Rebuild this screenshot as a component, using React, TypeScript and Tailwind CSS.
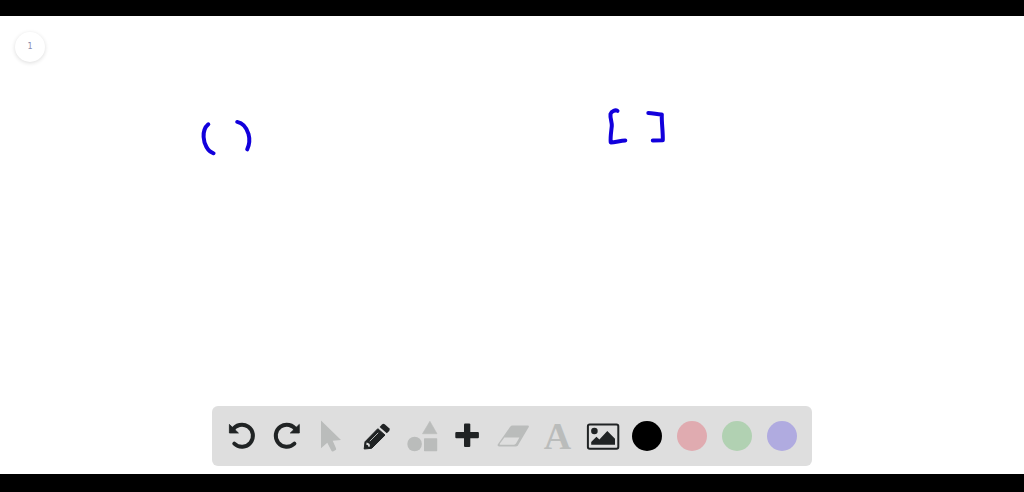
import { useState, type ReactNode } from "react";

const undoShape = (
  <>
    <path d="M5.4 9.2A11 11 0 1 1 7.3 22.6" fill="none" stroke="currentColor" strokeWidth="4" strokeLinecap="round" />
    <path d="M2.4 3.4 11.4 12H2.4Z" fill="currentColor" stroke="currentColor" strokeWidth=".8" strokeLinejoin="round" />
  </>
);

type Tool = { name: string; muted?: boolean; drawing: ReactNode };

const tools: Tool[] = [
  { name: "Undo", drawing: undoShape },
  { name: "Redo", drawing: <g transform="matrix(-1 0 0 1 29.7 0)">{undoShape}</g> },
  {
    name: "Select",
    muted: true,
    drawing: <path d="M4-.5V27.3L10.3 21.7 14.3 29.5Q15 31 16.5 30.2L18.3 29.3Q19.6 28.5 19 27.2L15.7 19.7 24 19Z" fill="currentColor" />,
  },
  {
    name: "Pen",
    drawing: (
      <>
        <path d="M2.2 28 3 20.8 15.8 7.7 23 14.1 9.7 27.3Z" fill="currentColor" stroke="currentColor" strokeWidth="1" strokeLinejoin="round" />
        <path d="M17.6 5.9 20 3.4Q21.3 2.2 22.7 3.3L27.2 7.3Q28.3 8.5 27.2 9.9L24.8 12.3Z" fill="currentColor" />
        <path d="M7.8 20.2 16.2 11.8" stroke="#dedede" strokeWidth=".8" />
        <path d="M4.6 21.6 4.3 23.8 6 24.2 6.3 25.8 8 25.6 7.6 23 6 22Z" fill="#dedede" />
      </>
    ),
  },
  {
    name: "Shapes",
    muted: true,
    drawing: (
      <g fill="currentColor">
        <circle cx="7.6" cy="23" r="7.3" />
        <rect x="17" y="17.2" width="13.2" height="13" rx=".6" />
        <path d="M22.9.3 30 12.7H15.5Z" stroke="currentColor" strokeWidth=".6" strokeLinejoin="round" />
      </g>
    ),
  },
  {
    name: "Add",
    drawing: (
      <g fill="currentColor">
        <rect x="3.3" y="11" width="23.6" height="6.3" rx="1.1" />
        <rect x="12" y="2.4" width="6.3" height="23.6" rx="1.1" />
      </g>
    ),
  },
  {
    name: "Eraser",
    muted: true,
    drawing: (
      <>
        <path d="M15.5 4.6H31Q32.4 4.8 31.6 6.2L21 24.2Q20 25.5 18.5 25.5H2Q-.1 25.2 .9 23.3L13 5.9Q14 4.6 15.5 4.6Z" fill="currentColor" />
        <path d="M7.4 16.6H22.4L19 22.6Q18.3 23.7 17 23.7H3.4Q2.2 23.5 2.8 22.7Z" fill="#dedede" />
      </>
    ),
  },
  {
    name: "Text",
    muted: true,
    drawing: (
      <text x="15.5" y="28" textAnchor="middle" fontSize="38" fontWeight="700" fill="currentColor" className="font-['Liberation_Serif',serif]">
        A
      </text>
    ),
  },
  {
    name: "Image",
    drawing: (
      <>
        <rect x=".9" y="3.4" width="30.4" height="24.4" rx="1.8" fill="none" stroke="currentColor" strokeWidth="2" />
        <circle cx="7.4" cy="10" r="3.3" fill="currentColor" />
        <path d="M4.2 23.8V21L9.4 15.8 12.4 18.4 20.3 10 28 17.7V23.8Z" fill="currentColor" />
      </>
    ),
  },
];

const inks = [
  { name: "Black", color: "bg-black" },
  { name: "Red", color: "bg-[#e0abb0]" },
  { name: "Green", color: "bg-[#b1d1b2]" },
  { name: "Purple", color: "bg-[#b0abe0]" },
];

export default function App() {
  const [ink, setInk] = useState("Black");

  return (
    <div className="flex min-h-screen flex-col border-t-16 border-b-18 border-black bg-white font-['DejaVu_Sans',sans-serif]">
      <main className="relative flex flex-1 flex-col justify-between px-4 pt-4 pb-2">
        <svg
          className="pointer-events-none absolute top-0 left-0 overflow-visible"
          width="1024"
          height="458"
          viewBox="0 16 1024 458"
          fill="none"
          stroke="#1200dc"
          strokeWidth="4"
          strokeLinecap="round"
          strokeLinejoin="round"
          aria-hidden="true"
        >
          <path d="M208.3 124.3C204.5 127.5 203.3 132 203.6 137C204 144 207.5 151.5 213.6 153.3" />
          <path d="M237.2 121.9C243 123 246.8 128.5 248.5 134C250 139.5 249.5 144.5 247.2 149.3" />
          <path d="M617.5 110.9C615.5 109.7 611.5 110.7 610.5 114C610 118 612 122 611.8 126C611.2 132 610.2 137 610.7 142.4C615 142.3 620 140.8 625.3 140.4" />
          <path d="M648.3 113C653 113 658 114.6 661.8 114.4C661.5 123 663 131 662.8 140.2L652.8 140.4" />
        </svg>

        <div className="relative -ml-px flex size-[30px] items-center justify-center rounded-full bg-white text-[8px] text-[#888caf] shadow-[0_1px_4px_rgba(0,0,0,0.14)]">
          1
        </div>

        <div role="toolbar" aria-label="Drawing tools" className="relative flex items-center gap-[15px] self-center rounded-md bg-[#dedede] p-[15px]">
          {tools.map((tool) => (
            <button
              key={tool.name}
              type="button"
              aria-label={tool.name}
              className={tool.muted ? "size-[30px] text-[#babcbb]" : "size-[30px] text-[#202324]"}
            >
              <svg viewBox="0 0 30 30" className="size-full overflow-visible" aria-hidden="true">
                {tool.drawing}
              </svg>
            </button>
          ))}
          {inks.map(({ name, color }) => (
            <button
              key={name}
              type="button"
              aria-label={name}
              aria-pressed={ink === name}
              onClick={() => setInk(name)}
              className={`size-[30px] rounded-full ${color}`}
            />
          ))}
        </div>
      </main>
    </div>
  );
}
